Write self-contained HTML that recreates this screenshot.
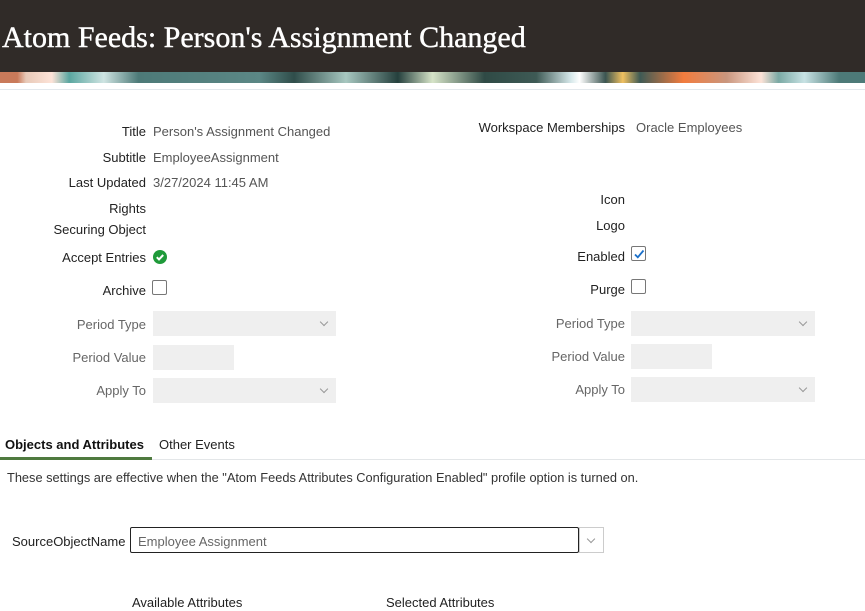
<!DOCTYPE html>
<html><head><style>
body{margin:0;width:865px;height:600px;overflow:hidden;background:#fff;font-family:"Liberation Sans",sans-serif;position:relative}
.a{position:absolute;white-space:nowrap;font-size:13px;line-height:16px}
.l{color:#222;text-align:right}
.g{color:#555}
.v{color:#666}
.sel{position:absolute;background:#efefef;height:25px}
.sel.d:after{content:"";position:absolute;right:9px;top:8px;width:5px;height:5px;border-right:1px solid #999;border-bottom:1px solid #999;transform:rotate(45deg)}
.cb{position:absolute;width:13px;height:13px;border:1px solid #777;border-radius:2px;background:#fff}
</style></head><body>
<div style="position:absolute;left:0;top:0;width:865px;height:72px;background:#302b28"></div>
<div class="a" style="left:2px;top:20px;font-family:'Liberation Serif',serif;font-size:30px;line-height:36px;color:#fff;-webkit-text-stroke:0.4px #fff">Atom Feeds: Person's Assignment Changed</div>
<div style="position:absolute;left:0;top:72px;width:865px;height:11px;background:linear-gradient(90deg,#c97a5a 0,#c97a5a 2%,#e8c9b8 3%,#fde3d8 6%,#5aa6a0 8%,#cfe4e2 12%,#4d7a78 16%,#5b8785 30%,#2f4d4a 34%,#a7c7c0 40%,#25403d 46%,#d6e4c8 50%,#2f4a45 56%,#3e5a55 62%,#d6e8ea 66%,#fff 67%,#3b5551 70%,#f0c060 72%,#3e5a55 74%,#f27c3e 79%,#c9967e 84%,#fde3d8 88%,#7aa9a4 90%,#c8e2e4 93%,#4d7a78 97%)"></div>
<div style="position:absolute;left:0;top:89px;width:865px;height:1px;background:#e3e8ec"></div>

<div class="a l" style="right:719px;top:124px">Title</div><div class="a g" style="left:153px;top:124px">Person's Assignment Changed</div>
<div class="a l" style="right:719px;top:150px">Subtitle</div><div class="a g" style="left:153px;top:150px">EmployeeAssignment</div>
<div class="a l" style="right:719px;top:175px">Last Updated</div><div class="a g" style="left:153px;top:175px">3/27/2024 11:45 AM</div>
<div class="a l" style="right:719px;top:201px">Rights</div>
<div class="a l" style="right:719px;top:222px">Securing Object</div>
<div class="a l" style="right:719px;top:250px">Accept Entries</div>
<svg style="position:absolute;left:153px;top:250px" width="14" height="14" viewBox="0 0 14 14"><circle cx="7" cy="7" r="7" fill="#1f9a3a"/><path d="M3.8 7.2l2.2 2.2 4.2-4.4" stroke="#fff" stroke-width="2" fill="none"/></svg>
<div class="a l" style="right:719px;top:283px">Archive</div><div class="cb" style="left:152px;top:280px"></div>
<div class="a l v" style="right:719px;top:317px">Period Type</div><div class="sel d" style="left:153px;top:311px;width:183px"></div>
<div class="a l v" style="right:719px;top:350px">Period Value</div><div class="sel" style="left:153px;top:345px;width:81px"></div>
<div class="a l v" style="right:719px;top:383px">Apply To</div><div class="sel d" style="left:153px;top:378px;width:183px"></div>

<div class="a l" style="right:240px;top:120px">Workspace Memberships</div><div class="a g" style="left:636px;top:120px">Oracle Employees</div>
<div class="a l" style="right:240px;top:192px">Icon</div>
<div class="a l" style="right:240px;top:218px">Logo</div>
<div class="a l" style="right:240px;top:249px">Enabled</div>
<div class="cb" style="left:631px;top:246px"></div>
<svg style="position:absolute;left:632px;top:247px" width="14" height="14" viewBox="0 0 14 14"><path d="M3 7.5l2.8 2.8L11.5 3.5" stroke="#1a6fc9" stroke-width="1.8" fill="none"/></svg>
<div class="a l" style="right:240px;top:282px">Purge</div><div class="cb" style="left:631px;top:279px"></div>
<div class="a l v" style="right:240px;top:316px">Period Type</div><div class="sel d" style="left:631px;top:311px;width:184px"></div>
<div class="a l v" style="right:240px;top:349px">Period Value</div><div class="sel" style="left:631px;top:344px;width:81px"></div>
<div class="a l v" style="right:240px;top:382px">Apply To</div><div class="sel d" style="left:631px;top:377px;width:184px"></div>

<div class="a" style="left:5px;top:437px;color:#111;font-weight:bold">Objects and Attributes</div>
<div class="a" style="left:159px;top:437px;color:#222">Other Events</div>
<div style="position:absolute;left:0;top:459px;width:865px;height:1px;background:#e3e6e8"></div>
<div style="position:absolute;left:0;top:457px;width:152px;height:3px;background:#4f7a3f"></div>
<div class="a" style="left:7px;top:470px;color:#333;font-size:12.8px">These settings are effective when the "Atom Feeds Attributes Configuration Enabled" profile option is turned on.</div>

<div class="a" style="left:12px;top:534px;color:#222">SourceObjectName</div>
<div style="position:absolute;left:130px;top:527px;width:447px;height:24px;border:1px solid #222;border-radius:2px"></div>
<div class="a v" style="left:138px;top:534px">Employee Assignment</div>
<div class="sel d" style="left:579px;top:527px;width:25px;height:26px;background:#fff;border:1px solid #ccc;box-sizing:border-box"></div>
<div class="a" style="left:132px;top:595px;color:#222">Available Attributes</div>
<div class="a" style="left:386px;top:595px;color:#222">Selected Attributes</div>
</body></html>
